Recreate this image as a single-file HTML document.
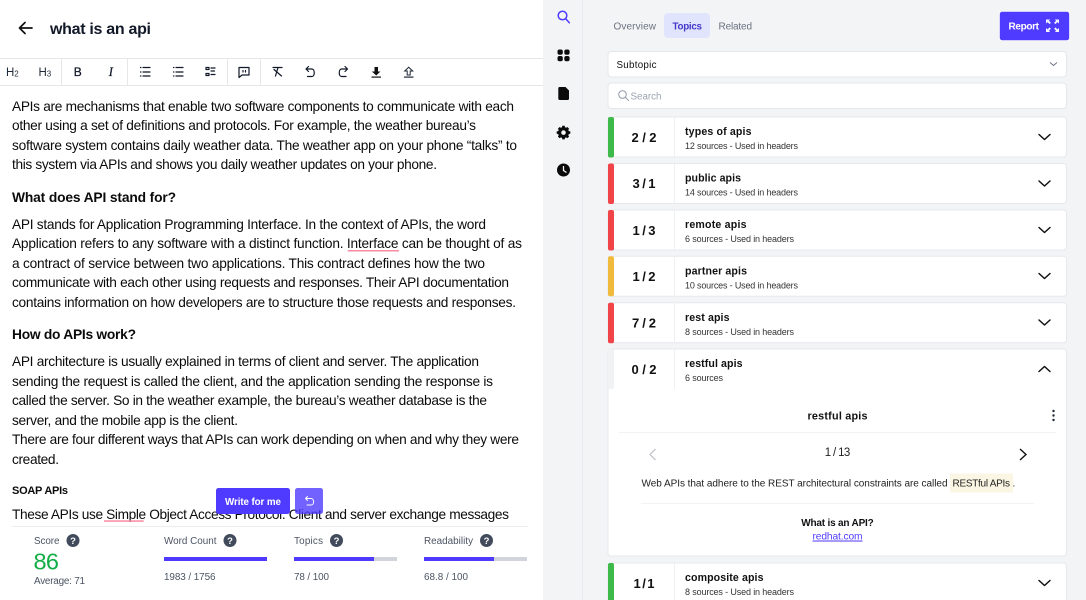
<!DOCTYPE html>
<html><head><meta charset="utf-8"><title>what is an api</title>
<style>
html,body{margin:0;padding:0;background:#fff;width:1086px;height:600px;overflow:hidden}
svg{display:block}
text{font-family:"Liberation Sans",sans-serif;fill:#111827}
.b{font-size:13.7px;fill:#0b0b0b}
.h{font-size:13.8px;font-weight:700;fill:#0b0b0b}
.lab{font-size:9.9px;fill:#4b5563}
.tt{font-size:10.6px;font-weight:700;fill:#111}
.sub{font-size:9px;fill:#333}
.sc{font-size:13px;font-weight:700;fill:#111}
.ic{fill:none;stroke:#111827;stroke-width:1.2;stroke-linecap:round;stroke-linejoin:round}
.ch{fill:none;stroke:#111;stroke-width:1.5;stroke-linecap:round;stroke-linejoin:round}
</style></head><body>
<svg width="1086" height="600" viewBox="0 0 1086 600" xmlns="http://www.w3.org/2000/svg">
<rect width="1086" height="600" fill="#fff"/>
<rect x="543" y="0" width="543" height="600" fill="#f3f4f6"/>
<rect x="582" y="0" width="1" height="600" fill="#e9eaee"/>

<!-- header -->
<path d="M32 28H19.5M25 22.5L19.5 28L25 33.500" fill="none" stroke="#111" stroke-width="1.700" stroke-linecap="round" stroke-linejoin="round"/>
<text x="50" y="34" style="font-size:16px;font-weight:700;fill:#111827" textLength="101">what is an api</text>

<!-- toolbar -->
<rect x="0" y="58" width="543" height="1" fill="#e7e7ea"/>
<rect x="0" y="85" width="543" height="1" fill="#e7e7ea"/>
<rect x="61" y="58" width="1" height="27" fill="#e7e7ea"/>
<rect x="127" y="58" width="1" height="27" fill="#e7e7ea"/>
<rect x="227" y="58" width="1" height="27" fill="#e7e7ea"/>
<rect x="260" y="58" width="1" height="27" fill="#e7e7ea"/>
<text x="6" y="76" style="font-size:11.500px;fill:#1f2937">H</text><text x="14.200" y="76.500" style="font-size:8px;fill:#1f2937">2</text>
<text x="38.500" y="76" style="font-size:11.500px;fill:#1f2937">H</text><text x="46.700" y="76.500" style="font-size:8px;fill:#1f2937">3</text>
<text x="73.800" y="76" style="font-size:12px;fill:#111827;stroke:#111827;stroke-width:.25">B</text>
<text x="108.800" y="76" style="font-family:'Liberation Serif',serif;font-size:12.500px;font-style:italic;fill:#111827;stroke:#111827;stroke-width:.25">I</text>
<g class="ic">
<path d="M143 67.500H150M143 72H150M143 76H150"/><path d="M140.500 67.500h.4M140.500 72h.4M140.500 76h.4"/>
<path d="M176 67.500H183M176 72H183M176 76H183"/><path d="M173.500 67.500h.4M173.500 72h.4M173.500 76h.4"/>
<path d="M206 67.500h3v2h-3zM206 73.500h3v2h-3zM211 68H215M211 71H214.500M211 74.500H215"/>
<path d="M239 67.500H249V75H242L239 77.500Z"/><path d="M243 70.500v1.500M245.500 70.500v1.500"/>
<path d="M273 67.500H282M278 67.500L275.500 76M274 69.500L281.500 76"/>
<path d="M306 69H312C315 69 315 76.500 312 76.500H307.500M306 69L308.500 66.500M306 69L308.500 71.500"/>
<path d="M347.500 69H341.500C338.500 69 338.500 76.500 341.500 76.500H346M347.500 69L345 66.500M347.500 69L345 71.500"/>
</g>
<path d="M374.500 67h3.500v4.500h2.500l-4.300 4-4.300-4h2.600z" fill="#111"/><rect x="371.500" y="76.500" width="9.500" height="1.200" fill="#111"/>
<path d="M408.700 67.200l4 3.800h-2.500v4h-3v-4h-2.500z" fill="none" stroke="#1f2937" stroke-width="1"/><rect x="404" y="76.500" width="9.500" height="1.200" fill="#1f2937"/>

<!-- body text -->
<g class="b">
<text class="b" x="12" y="111" textLength="502">APIs are mechanisms that enable two software components to communicate with each</text>
<text class="b" x="12" y="130" textLength="464">other using a set of definitions and protocols. For example, the weather bureau’s</text>
<text class="b" x="12" y="150" textLength="505">software system contains daily weather data. The weather app on your phone “talks” to</text>
<text class="b" x="12" y="169" textLength="425">this system via APIs and shows you daily weather updates on your phone.</text>
<text class="h" x="12" y="202" textLength="164">What does API stand for?</text>
<text class="b" x="12" y="229" textLength="474">API stands for Application Programming Interface. In the context of APIs, the word</text>
<text class="b" x="12" y="248" textLength="510">Application refers to any software with a distinct function. Interface can be thought of as</text>
<text class="b" x="12" y="268" textLength="473">a contract of service between two applications. This contract defines how the two</text>
<text class="b" x="12" y="287" textLength="497">communicate with each other using requests and responses. Their API documentation</text>
<text class="b" x="12" y="307" textLength="504">contains information on how developers are to structure those requests and responses.</text>
<text class="h" x="12" y="339" textLength="124">How do APIs work?</text>
<text class="b" x="12" y="366" textLength="467">API architecture is usually explained in terms of client and server. The application</text>
<text class="b" x="12" y="386" textLength="481">sending the request is called the client, and the application sending the response is</text>
<text class="b" x="12" y="405" textLength="475">called the server. So in the weather example, the bureau’s weather database is the</text>
<text class="b" x="12" y="425" textLength="226">server, and the mobile app is the client.</text>
<text class="b" x="12" y="444" textLength="507">There are four different ways that APIs can work depending on when and why they were</text>
<text class="b" x="12" y="464" textLength="47">created.</text>
<text x="12" y="494" style="font-size:11px;font-weight:700;fill:#0b0b0b" textLength="56">SOAP APIs</text>
<text class="b" x="12" y="519" textLength="497">These APIs use Simple Object Access Protocol. Client and server exchange messages</text>
</g>
<rect x="347.700" y="250" width="51.300" height="1.500" fill="#f98ba3"/>
<rect x="104" y="520.300" width="39.700" height="1.500" fill="#f98ba3"/>

<!-- floating buttons -->
<rect x="216" y="488" width="74" height="26" rx="2.500" fill="#4f3bff"/>
<text x="225" y="505" style="font-size:9.800px;font-weight:700;fill:#fff" textLength="56">Write for me</text>
<rect x="295" y="488" width="28" height="26" rx="2.500" fill="#4f3bff" fill-opacity=".8"/>
<path d="M305.500 498.500H311C314.500 498.500 314.500 505 311 505H307M305.500 498.500L307.500 496.500M305.500 498.500L307.500 500.500" fill="none" stroke="#fff" stroke-width="1" stroke-linecap="round" stroke-linejoin="round"/>

<!-- metrics -->
<rect x="0" y="522.500" width="543" height="78" fill="#fff"/>
<rect x="12" y="526" width="516" height="1" fill="#eceded"/>
<text class="lab" x="34" y="544" textLength="25.500">Score</text>
<circle cx="73" cy="540.500" r="6.500" fill="#414b5c"/><text x="73" y="544" text-anchor="middle" style="font-size:9.500px;font-weight:700;fill:#fff">?</text>
<text x="33.500" y="569.500" style="font-size:23.500px;fill:#12ad45" textLength="25.500">86</text>
<text class="lab" x="34" y="584" textLength="51">Average: 71</text>

<text class="lab" x="164" y="544" textLength="52.500">Word Count</text>
<circle cx="230" cy="540.500" r="6.500" fill="#414b5c"/><text x="230" y="544" text-anchor="middle" style="font-size:9.500px;font-weight:700;fill:#fff">?</text>
<rect x="164" y="557" width="103" height="4" fill="#4f3bff"/>
<text class="lab" x="164" y="580" textLength="51.500">1983 / 1756</text>

<text class="lab" x="294" y="544" textLength="29">Topics</text>
<circle cx="336.500" cy="540.500" r="6.500" fill="#414b5c"/><text x="336.500" y="544" text-anchor="middle" style="font-size:9.500px;font-weight:700;fill:#fff">?</text>
<rect x="294" y="557" width="103" height="4" fill="#d1d5db"/><rect x="294" y="557" width="80" height="4" fill="#4f3bff"/>
<text class="lab" x="294" y="580" textLength="35">78 / 100</text>

<text class="lab" x="424" y="544" textLength="49">Readability</text>
<circle cx="486.500" cy="540.500" r="6.500" fill="#414b5c"/><text x="486.500" y="544" text-anchor="middle" style="font-size:9.500px;font-weight:700;fill:#fff">?</text>
<rect x="424" y="557" width="103" height="4" fill="#d1d5db"/><rect x="424" y="557" width="70" height="4" fill="#4f3bff"/>
<text class="lab" x="424" y="580" textLength="44">68.8 / 100</text>

<!-- sidebar icons -->
<circle cx="562.500" cy="15.500" r="4.300" fill="none" stroke="#4f3bff" stroke-width="1.500"/>
<path d="M565.800 18.800L569.300 22.800" stroke="#4f3bff" stroke-width="1.500" stroke-linecap="round"/>
<g fill="#0b0b0b">
<rect x="557.500" y="49.500" width="5.300" height="5.300" rx="2"/><rect x="564.300" y="49.500" width="5.300" height="5.300" rx="2"/>
<rect x="557.500" y="56" width="5.300" height="5.300" rx="2"/><rect x="564.300" y="56" width="5.300" height="5.300" rx="2"/>
<path d="M559.500 87H565.500L569 90.500V98.800a1.200 1.200 0 0 1-1.200 1.200H559.500a1.200 1.200 0 0 1-1.200-1.200V88.200a1.200 1.200 0 0 1 1.200-1.200z"/>
<path fill-rule="evenodd" d="M562.300 125.800h2.400l.3 1.500 1.100.5 1.300-.8 1.700 1.700-.8 1.300.5 1.100 1.500.3v2.400l-1.500.3-.5 1.100.8 1.300-1.700 1.700-1.300-.8-1.100.5-.3 1.500h-2.400l-.3-1.500-1.100-.5-1.300.8-1.700-1.700.8-1.300-.5-1.100-1.500-.3v-2.400l1.500-.3.5-1.100-.8-1.300 1.700-1.700 1.300.8 1.100-.5zM563.500 130.300a2.300 2.300 0 1 0 .01 0z"/>
<circle cx="563.500" cy="170" r="6.500"/>
</g>
<path d="M563.500 166V170.500L566.500 172.500" fill="none" stroke="#f3f4f6" stroke-width="1.300"/>

<!-- tabs -->
<rect x="664" y="13" width="46" height="25" rx="4" fill="#e0e4fd"/>
<text x="613.500" y="29.500" style="font-size:10px;fill:#6b7280" textLength="42.500">Overview</text>
<text x="672.500" y="29.500" style="font-size:9.800px;font-weight:700;fill:#4338ca" textLength="29.500">Topics</text>
<text x="718.500" y="29.500" style="font-size:10px;fill:#6b7280" textLength="33.500">Related</text>

<!-- report -->
<rect x="999.500" y="11.500" width="70" height="29" rx="2.500" fill="#4f3bff" stroke="#fff" stroke-width=".6"/>
<text x="1008.500" y="29.500" style="font-size:10px;font-weight:700;fill:#fff" textLength="30.500">Report</text>
<g fill="#f2f1ff">
<path d="M1046 19.500h4.200l-1.300 1.300 2 2-1.300 1.300-2-2-1.600 1.400z"/>
<path d="M1059 19.500h-4.200l1.300 1.300-2 2 1.300 1.300 2-2 1.600 1.400z"/>
<path d="M1046 32h4.200l-1.300-1.300 2-2-1.300-1.300-2 2-1.600-1.400z"/>
<path d="M1059 32h-4.200l1.300-1.300-2-2 1.300-1.300 2 2 1.600-1.400z"/>
</g>

<!-- select and search -->
<rect x="608" y="51.500" width="458.500" height="25.500" rx="3.500" fill="#fff" stroke="#e5e7eb"/>
<text x="616.500" y="68" style="font-size:9.800px;fill:#111" textLength="40">Subtopic</text>
<path d="M1050 62.500L1053.500 65.500L1057 62.500" fill="none" stroke="#6b7280" stroke-width="1"/>
<rect x="608" y="83" width="458.500" height="25.500" rx="3.500" fill="#fff" stroke="#e5e7eb"/>
<circle cx="622.500" cy="94.500" r="3.800" fill="none" stroke="#9ca3af" stroke-width="1.100"/><path d="M625.300 97.300L628.500 100.500" stroke="#9ca3af" stroke-width="1.100" stroke-linecap="round"/>
<text x="630.500" y="99.500" style="font-size:9.800px;fill:#9ca3af" textLength="31">Search</text>

<!-- cards -->
<g id="cards">
<rect x="608" y="117" width="458.500" height="40" rx="3" fill="#fff" stroke="#e7e8ec"/>
<rect x="608" y="117" width="6" height="40.500" rx="2" fill="#3dba4a"/><rect x="674" y="117" width="1" height="40" fill="#eff0f2"/>
<text class="sc" x="644" y="142" text-anchor="middle" textLength="25">2 / 2</text>
<text class="tt" x="685" y="135" textLength="66.500">types of apis</text>
<text class="sub" x="685" y="149" textLength="113">12 sources - Used in headers</text>
<path class="ch" d="M1039 134.500L1044.500 139.500L1050 134.500"/>

<rect x="608" y="163.500" width="458.500" height="40" rx="3" fill="#fff" stroke="#e7e8ec"/>
<rect x="608" y="163.500" width="6" height="40.500" rx="2" fill="#f14449"/><rect x="674" y="163.500" width="1" height="40" fill="#eff0f2"/>
<text class="sc" x="644" y="188" text-anchor="middle" textLength="23">3 / 1</text>
<text class="tt" x="685" y="181.500" textLength="56">public apis</text>
<text class="sub" x="685" y="195.500" textLength="113">14 sources - Used in headers</text>
<path class="ch" d="M1039 181L1044.500 186L1050 181"/>

<rect x="608" y="210" width="458.500" height="40" rx="3" fill="#fff" stroke="#e7e8ec"/>
<rect x="608" y="210" width="6" height="40.500" rx="2" fill="#f14449"/><rect x="674" y="210" width="1" height="40" fill="#eff0f2"/>
<text class="sc" x="644" y="235" text-anchor="middle" textLength="23">1 / 3</text>
<text class="tt" x="685" y="228" textLength="61.500">remote apis</text>
<text class="sub" x="685" y="242" textLength="109">6 sources - Used in headers</text>
<path class="ch" d="M1039 227.500L1044.500 232.500L1050 227.500"/>

<rect x="608" y="256.300" width="458.500" height="40" rx="3" fill="#fff" stroke="#e7e8ec"/>
<rect x="608" y="256.300" width="6" height="40" rx="2" fill="#f0bb3d"/><rect x="674" y="256.300" width="1" height="40" fill="#eff0f2"/>
<text class="sc" x="644" y="281" text-anchor="middle" textLength="23">1 / 2</text>
<text class="tt" x="685" y="274.500" textLength="62">partner apis</text>
<text class="sub" x="685" y="288.500" textLength="113">10 sources - Used in headers</text>
<path class="ch" d="M1039 273.500L1044.500 278.500L1050 273.500"/>

<rect x="608" y="302.700" width="458.500" height="40" rx="3" fill="#fff" stroke="#e7e8ec"/>
<rect x="608" y="302.700" width="6" height="40.500" rx="2" fill="#f14449"/><rect x="674" y="302.700" width="1" height="40" fill="#eff0f2"/>
<text class="sc" x="644" y="327.500" text-anchor="middle" textLength="24">7 / 2</text>
<text class="tt" x="685" y="321" textLength="44.500">rest apis</text>
<text class="sub" x="685" y="335" textLength="109">8 sources - Used in headers</text>
<path class="ch" d="M1039 320L1044.500 325L1050 320"/>

<rect x="608" y="349" width="458.500" height="207" rx="3" fill="#fff" stroke="#e7e8ec"/>
<rect x="608" y="349" width="6" height="40" rx="2" fill="#f1f2f4"/><rect x="674" y="349" width="1" height="40" fill="#eff0f2"/>
<text class="sc" x="644" y="374" text-anchor="middle" textLength="25">0 / 2</text>
<text class="tt" x="685" y="367" textLength="57.500">restful apis</text>
<text class="sub" x="685" y="381" textLength="38">6 sources</text>
<path class="ch" d="M1039 371.500L1044.500 366.500L1050 371.500"/>
<text x="837.500" y="419.500" text-anchor="middle" style="font-size:10.800px;font-weight:700;fill:#111" textLength="60">restful apis</text>
<circle cx="1053.500" cy="411" r="1.200" fill="#1f2937"/><circle cx="1053.500" cy="415.500" r="1.200" fill="#1f2937"/><circle cx="1053.500" cy="420" r="1.200" fill="#1f2937"/>
<rect x="619" y="432" width="437" height="1" fill="#f2f3f4"/>
<path d="M655.500 449L650 454.500L655.500 460" fill="none" stroke="#c3c6cc" stroke-width="1.300"/>
<text x="837.500" y="456" text-anchor="middle" style="font-size:11.500px;fill:#222" textLength="25.500">1 / 13</text>
<path d="M1020 449L1026 454.500L1020 460" fill="none" stroke="#111" stroke-width="1.400"/>
<rect x="950" y="473.500" width="63" height="19" fill="#faf6e3"/>
<text x="641.500" y="486.500" style="font-size:10px;fill:#222" textLength="306">Web APIs that adhere to the REST architectural constraints are called</text>
<text x="952.500" y="486.500" style="font-size:10px;fill:#222" textLength="57.500">RESTful APIs</text>
<text x="1012.500" y="486.500" style="font-size:10px;fill:#222">.</text>
<rect x="641" y="503" width="393" height="1" fill="#f2f3f4"/>
<text x="837.500" y="526" text-anchor="middle" style="font-size:10px;font-weight:700;fill:#111" textLength="72.500">What is an API?</text>
<text x="837.500" y="539.500" text-anchor="middle" style="font-size:10.200px;fill:#4f3bff;text-decoration:underline" textLength="50">redhat.com</text>

<rect x="608" y="563" width="458.500" height="60" rx="3" fill="#fff" stroke="#e7e8ec"/>
<rect x="608" y="563" width="6" height="40" rx="2" fill="#3dba4a"/><rect x="674" y="563" width="1" height="40" fill="#eff0f2"/>
<text class="sc" x="644" y="588" text-anchor="middle" textLength="21">1 / 1</text>
<text class="tt" x="685" y="581" textLength="78.500">composite apis</text>
<text class="sub" x="685" y="595" textLength="109">8 sources - Used in headers</text>
<path class="ch" d="M1039 580.500L1044.500 585.500L1050 580.500"/>
</g>
</svg>
</body></html>
